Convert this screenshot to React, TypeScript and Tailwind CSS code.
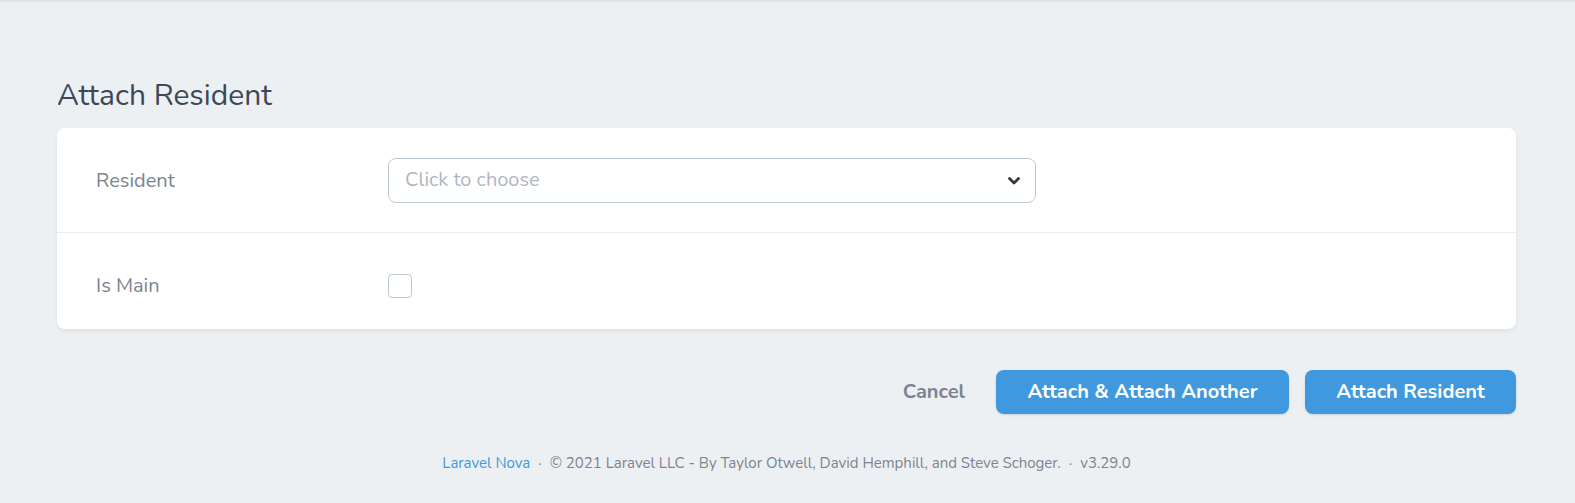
import type React from "react";

const Field: React.FC<{ label: string; children: React.ReactNode; className?: string; labelClass?: string }> = ({
  label,
  children,
  className,
  labelClass,
}) => (
  <div className={`flex items-center ${className ?? ""}`}>
    <div className={`w-[329px] shrink-0 pl-[39px] text-[20px] text-[#7c858e] ${labelClass ?? ""}`}>{label}</div>
    <div className="flex-1">{children}</div>
  </div>
);

const App: React.FC = () => {
  return (
    <div className="min-h-[503px] bg-[#edf0f3] font-['Nunito','Open_Sans',sans-serif] relative">
      {/* header shadow */}
      <div className="h-[3px] bg-gradient-to-b from-[#dde0e3] to-[#edf0f3]" />

      <main className="pl-[57px] pr-[59px] pt-[75px]">
        <h1 className="text-[30px] font-normal leading-[36px] text-[#3d4856] mb-[14px]">Attach Resident</h1>

        <div className="bg-white rounded-[8px] shadow-[0_2px_4px_rgba(0,0,0,0.06)]">
          <Field label="Resident" className="h-[105px] border-b border-[#ebeef1]" labelClass="mt-[2px]">
            <div className="w-[648px] h-[45px] ml-[2px] rounded-[8px] border border-[#bacad6] flex items-center justify-between pl-[16px] pr-[15px]">
              <span className="text-[20px] text-[#b1b7bf]">Click to choose</span>
              <svg viewBox="0 0 12 8" className="w-[12px] h-[8px] mt-[1px]">
                <polyline points="1.5,1.5 6,6 10.5,1.5" fill="none" stroke="#35393c" strokeWidth="2.8" strokeLinecap="round" strokeLinejoin="round" />
              </svg>
            </div>
          </Field>
          <Field label="Is Main" className="h-[96px] pt-[10px]">
            <div className="w-[24px] h-[24px] ml-[2px] rounded-[4px] border border-[#bacad6] bg-white" />
          </Field>
        </div>

        <div className="flex items-center justify-end mt-[41px] gap-[16px]">
          <button className="text-[20px] font-bold text-[#7c858e] mr-[15px]">Cancel</button>
          <button className="h-[44px] w-[293px] rounded-[8px] bg-[#4099de] text-white text-[20px] font-bold shadow-sm">
            Attach &amp; Attach Another
          </button>
          <button className="h-[44px] w-[211px] rounded-[8px] bg-[#4099de] text-white text-[20px] font-bold shadow-sm">
            Attach Resident
          </button>
        </div>

        <footer className="text-center text-[15px] text-[#7c858e] mt-[38px]">
          <a className="text-[#4099de]">Laravel Nova</a>
          <span className="mx-[8px]">·</span>© 2021 Laravel LLC - By Taylor Otwell, David Hemphill, and Steve Schoger.
          <span className="mx-[8px]">·</span>v3.29.0
        </footer>
      </main>
    </div>
  );
};

export default App;
